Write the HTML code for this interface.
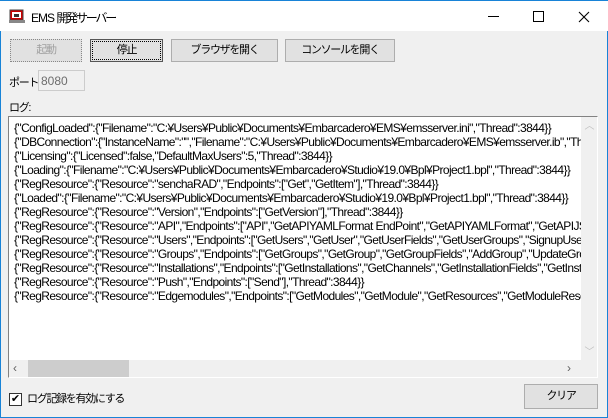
<!DOCTYPE html><html><head><meta charset="utf-8"><style>
*{box-sizing:border-box;margin:0;padding:0}
body{width:608px;height:418px;overflow:hidden;background:#f0f0f0;font:12px "Liberation Sans","Noto Sans CJK JP",sans-serif;color:#000;position:relative}
.j{font-size:11px;letter-spacing:-1.3px}
.win{position:absolute;inset:0;border:1px solid #1883d7;border-top:none}
.title{position:absolute;left:0;top:0;width:608px;height:31px;background:#fff;border-top:1px solid #1883d7}
.title span{position:absolute;left:31px;top:8px;font-size:12px;letter-spacing:-1px}
.btn{position:absolute;height:23px;border:1px solid #adadad;background:#e1e1e1;text-align:center;line-height:21px}
.ab{position:absolute}
.memo{position:absolute;left:8px;top:116px;width:590px;height:262px;border:1px solid #828282;border-right-color:#fff;border-bottom-color:#fff;background:#fff;overflow:hidden}
.memo pre{font:12px "Liberation Sans",sans-serif;line-height:14px;padding:4px 0 0 5px;white-space:pre;letter-spacing:-0.6px}
</style></head><body>
<div class="win"></div>
<div class="title">
<svg style="position:absolute;left:9px;top:8px" width="16" height="15"><rect x="1" y="1" width="13" height="10" fill="#c00" stroke="#444"/><rect x="3" y="3" width="9" height="6" fill="#fff"/><rect x="5" y="5" width="5" height="3" fill="#333"/><rect x="0" y="11" width="16" height="3" fill="#888"/></svg>
<span>EMS <span style="position:static;font-size:12px;letter-spacing:-2.2px">開発サーバー</span></span>
<div class="ab" style="left:488px;top:15px;width:11px;height:1px;background:#000"></div>
<div class="ab" style="left:533px;top:10px;width:11px;height:11px;border:1px solid #000"></div>
<svg class="ab" style="left:578px;top:10px" width="12" height="12"><path d="M1 1L11 11M11 1L1 11" stroke="#000" stroke-width="1.1"/></svg>
</div>
<div class="btn j" style="left:10px;top:39px;width:72px;color:#a0a0a0;border:1px dotted #888;background:#e1e1e1">起動</div>
<div class="btn j" style="left:90px;top:39px;width:73px;border:1px solid #555;outline:1px dotted #000;outline-offset:-3px">停止</div>
<div class="btn j" style="left:171px;top:39px;width:107px">ブラウザを開く</div>
<div class="btn j" style="left:285px;top:39px;width:110px">コンソールを開く</div>
<div class="ab j" style="left:9px;top:74px">ポート</div>
<div class="ab" style="left:38px;top:70px;width:47px;height:21px;border:1px solid #ccc;background:#f0f0f0;color:#6d6d6d;padding:3px 0 0 2px">8080</div>
<div class="ab j" style="left:9px;top:99px">ログ:</div>
<div class="memo"><pre>{"ConfigLoaded":{"Filename":"C:¥Users¥Public¥Documents¥Embarcadero¥EMS¥emsserver.ini","Thread":3844}}
{"DBConnection":{"InstanceName":"","Filename":"C:¥Users¥Public¥Documents¥Embarcadero¥EMS¥emsserver.ib","Thread":3844}}
{"Licensing":{"Licensed":false,"DefaultMaxUsers":5,"Thread":3844}}
{"Loading":{"Filename":"C:¥Users¥Public¥Documents¥Embarcadero¥Studio¥19.0¥Bpl¥Project1.bpl","Thread":3844}}
{"RegResource":{"Resource":"senchaRAD","Endpoints":["Get","GetItem"],"Thread":3844}}
{"Loaded":{"Filename":"C:¥Users¥Public¥Documents¥Embarcadero¥Studio¥19.0¥Bpl¥Project1.bpl","Thread":3844}}
{"RegResource":{"Resource":"Version","Endpoints":["GetVersion"],"Thread":3844}}
{"RegResource":{"Resource":"API","Endpoints":["API","GetAPIYAMLFormat EndPoint","GetAPIYAMLFormat","GetAPIJSONFormat"]}}
{"RegResource":{"Resource":"Users","Endpoints":["GetUsers","GetUser","GetUserFields","GetUserGroups","SignupUser"]}}
{"RegResource":{"Resource":"Groups","Endpoints":["GetGroups","GetGroup","GetGroupFields","AddGroup","UpdateGroup"]}}
{"RegResource":{"Resource":"Installations","Endpoints":["GetInstallations","GetChannels","GetInstallationFields","GetInstallation"]}}
{"RegResource":{"Resource":"Push","Endpoints":["Send"],"Thread":3844}}
{"RegResource":{"Resource":"Edgemodules","Endpoints":["GetModules","GetModule","GetResources","GetModuleResources"]}}</pre>
<div class="ab" style="left:572px;top:0;width:17px;height:243px;background:#f0f0f0;color:#c0c0c0;font-size:10px;text-align:center">︿<div style="position:absolute;bottom:2px;width:17px">﹀</div></div>
<div class="ab" style="left:0;top:243px;width:572px;height:17px;background:#f0f0f0"><span class="ab" style="left:4px;top:1px;color:#606060">‹</span><div class="ab" style="left:19px;top:0;width:101px;height:17px;background:#cdcdcd"></div><span class="ab" style="left:558px;top:1px;color:#606060">›</span></div>
<div class="ab" style="left:572px;top:243px;width:17px;height:17px;background:#f0f0f0"></div>
</div>
<div class="ab" style="left:9px;top:393px;width:13px;height:13px;border:1px solid #333;background:#fff;font-size:11px;line-height:11px;text-align:center">✔</div>
<div class="ab j" style="left:27px;top:390px">ログ記録を有効にする</div>
<div class="btn j" style="left:524px;top:384px;width:74px;height:25px;line-height:23px">クリア</div>
</body></html>
